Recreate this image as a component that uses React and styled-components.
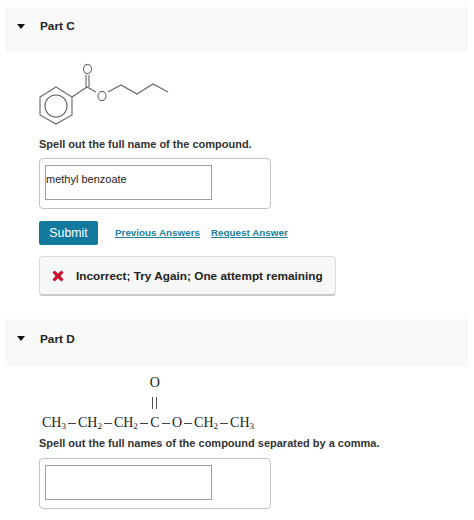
import React from "react";
import styled, { createGlobalStyle } from "styled-components";

const GlobalStyle = createGlobalStyle`
  html, body {
    margin: 0;
    padding: 0;
    background: #fff;
    font-family: "Liberation Sans", Arial, sans-serif;
    color: #222;
  }
`;

const Page = styled.div`
  width: 474px;
  height: 520px;
  overflow: hidden;
  padding: 7px 6px 0 5px;
  box-sizing: border-box;
`;

const PartHeader = styled.div`
  height: ${(p) => p.$height}px;
  margin-top: ${(p) => p.$top || 0}px;
  background: #f8f8f8;
  display: flex;
  align-items: center;
  padding: 0 0 8px 12px;
  box-sizing: border-box;
  font-size: 11.8px;
  font-weight: 700;
  color: #222;
`;

const Caret = styled.span`
  width: 0;
  height: 0;
  border-left: 4.5px solid transparent;
  border-right: 4.5px solid transparent;
  border-top: 5px solid #111;
  margin-right: 15px;
`;

const Body = styled.div`
  padding-left: 34px;
`;

const Molecule = styled.svg`
  display: block;
  width: 135px;
  height: 64px;
  margin-top: 9px;
`;

const Prompt = styled.p`
  margin: ${(p) => p.$top}px 0 0;
  font-size: 11px;
  line-height: 14px;
  font-weight: 700;
  color: #333;
`;

const AnswerBox = styled.div`
  width: 232px;
  height: 51px;
  margin-top: ${(p) => p.$top}px;
  padding: 6px 0 0 5px;
  border: 1px solid #c4c4c4;
  border-radius: 4px;
  box-sizing: border-box;
  background: #fff;
`;

const AnswerInput = styled.input`
  display: block;
  width: 167px;
  height: 35px;
  padding: 0 0 8px 0;
  border: 1px solid #a0a0a0;
  border-radius: 0;
  box-sizing: border-box;
  outline: none;
  font-family: "Liberation Sans", Arial, sans-serif;
  font-size: 11px;
  color: #222;
  background: #fff;
`;

const Actions = styled.div`
  display: flex;
  align-items: center;
  margin-top: 12px;
`;

const SubmitButton = styled.button`
  width: 59px;
  height: 24px;
  margin-right: 17px;
  padding: 0;
  border: none;
  border-radius: 2px;
  background: #13799c;
  color: #fff;
  font-family: "Liberation Sans", Arial, sans-serif;
  font-size: 12.3px;
`;

const ActionLink = styled.a`
  margin: 0 11px 2px 0;
  font-size: 9.85px;
  font-weight: 700;
  color: #1c7f9e;
  text-decoration: underline;
`;

const Feedback = styled.div`
  display: flex;
  align-items: center;
  width: 297px;
  height: 40px;
  margin-top: 11px;
  padding-left: 12px;
  box-sizing: border-box;
  background: #f7f7f7;
  border: 1px solid #dadada;
  border-bottom: 2px solid #c8c8c8;
  border-radius: 4px;
  font-size: 11.8px;
  font-weight: 700;
  color: #222;
`;

const CrossIcon = styled.svg`
  width: 12px;
  height: 12px;
  margin-right: 12px;
`;

const Formula = styled.div`
  display: flex;
  align-items: flex-end;
  margin: 10px 0 0 3px;
  font-family: "Liberation Serif", "Times New Roman", serif;
  font-size: 14px;
  line-height: 14px;
  color: #222;
`;

const Group = styled.span`
  white-space: nowrap;
  sub {
    font-size: 9px;
    line-height: 0;
    vertical-align: -1.5px;
  }
`;

const Bond = styled.span`
  width: 8px;
  height: 1px;
  margin: 0 2px 6px;
  background: #444;
`;

const Carbonyl = styled.span`
  display: flex;
  flex-direction: column;
  align-items: center;
`;

const DoubleBond = styled.span`
  width: 3px;
  height: 12px;
  margin: 7px 0 7px;
  border-left: 1px solid #555;
  border-right: 1px solid #555;
`;

const BenzoateDrawing = () => (
  <Molecule viewBox="0 0 135 64" fill="none" stroke="#666" strokeWidth="1.1">
    <path d="M17 25 L33 35 L33 53 L17 62 L1 53 L1 35 Z" />
    <circle cx="17" cy="44" r="11" />
    <path d="M33 35 L48 25 L57 30" />
    <path d="M47 25 L47 13 M50 25 L50 13" />
    <ellipse cx="48.5" cy="7" rx="4" ry="4.6" />
    <ellipse cx="63" cy="34" rx="4" ry="4.6" />
    <path d="M69 30 L82 23 L98 32 L114 22 L129 30" />
  </Molecule>
);

const Part = ({ title, height, top }) => (
  <PartHeader $height={height} $top={top}>
    <Caret />
    {title}
  </PartHeader>
);

export default function App() {
  return (
    <Page>
      <GlobalStyle />
      <Part title="Part C" height={46} />
      <Body>
        <BenzoateDrawing />
        <Prompt $top={11}>Spell out the full name of the compound.</Prompt>
        <AnswerBox $top={7}>
          <AnswerInput defaultValue="methyl benzoate" />
        </AnswerBox>
        <Actions>
          <SubmitButton>Submit</SubmitButton>
          <ActionLink>Previous Answers</ActionLink>
          <ActionLink>Request Answer</ActionLink>
        </Actions>
        <Feedback>
          <CrossIcon viewBox="0 0 12 12">
            <path d="M0.5 2.5 L2.5 0.5 L6 3.5 L9.5 0.5 L11.5 2.5 L8.5 6 L11.5 9.5 L9.5 11.5 L6 8.5 L2.5 11.5 L0.5 9.5 L3.5 6 Z" fill="#c8102e" />
          </CrossIcon>
          Incorrect; Try Again; One attempt remaining
        </Feedback>
      </Body>
      <Part title="Part D" height={47} top={23} />
      <Body>
        <Formula>
          <Group>CH<sub>3</sub></Group>
          <Bond />
          <Group>CH<sub>2</sub></Group>
          <Bond />
          <Group>CH<sub>2</sub></Group>
          <Bond />
          <Carbonyl>
            O
            <DoubleBond />
            C
          </Carbonyl>
          <Bond />
          <Group>O</Group>
          <Bond />
          <Group>CH<sub>2</sub></Group>
          <Bond />
          <Group>CH<sub>3</sub></Group>
        </Formula>
        <Prompt $top={6}>Spell out the full names of the compound separated by a comma.</Prompt>
        <AnswerBox $top={8}>
          <AnswerInput />
        </AnswerBox>
      </Body>
    </Page>
  );
}
